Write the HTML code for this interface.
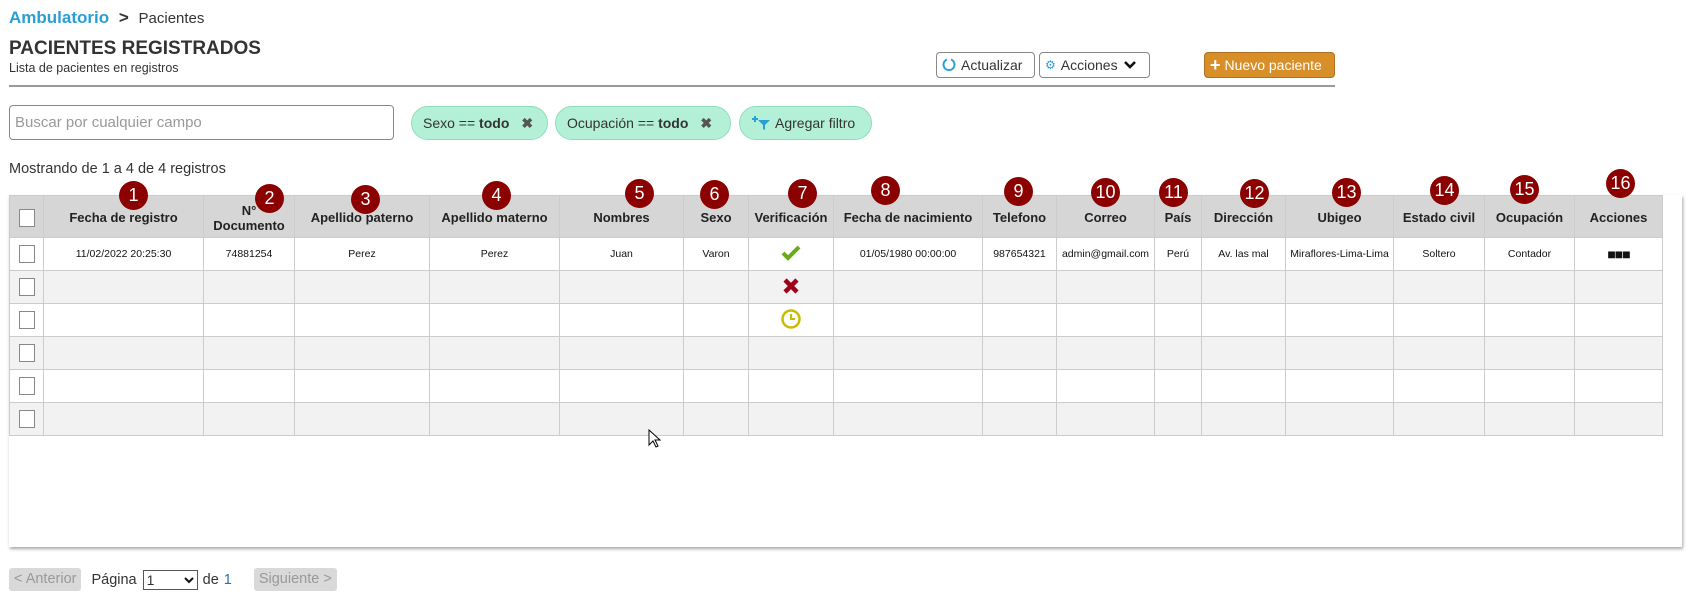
<!DOCTYPE html>
<html><head><meta charset="utf-8"><style>
*{box-sizing:border-box;margin:0;padding:0}
body{width:1696px;height:604px;background:#fff;font-family:"Liberation Sans",sans-serif;color:#333;position:relative;overflow:hidden}
.a{position:absolute;white-space:nowrap}
.crumb{left:9px;top:8px;font-size:17px}
.crumb b{color:#2a9fd6;font-weight:bold}
.title{left:9px;top:38px;font-size:19px;font-weight:bold;color:#333}
.sub{left:9px;top:61px;font-size:12.5px;color:#333}
.hr{left:9px;top:85px;width:1326px;height:2px;background:#999}
.btn{height:26px;top:52px;border:1px solid #888;border-radius:4px;background:#fff;font-size:14px;display:flex;align-items:center;padding:0 5px;color:#333}
.nuevo{background:#d98f27;border-color:#b07020;color:#fff;font-size:14px}
.search{left:9px;top:105px;width:385px;height:35px;border:1px solid #888;border-radius:4px;font-size:15px;color:#999;padding:8px 5px}
.chip{top:106px;height:34px;background:#b4f0d8;border:1px solid #8fdcbc;border-radius:17px;font-size:14px;display:flex;align-items:center;padding:0 11px;color:#333}
.chip .x{color:#555;font-weight:bold;margin-left:12px;font-size:14px}
.most{left:9px;top:161px;font-size:14.5px}
.card{left:9px;top:195px;width:1673px;height:352px;background:#fff;box-shadow:1px 2px 3px rgba(0,0,0,.35)}
table{position:absolute;left:9px;top:195px;border-collapse:collapse;table-layout:fixed}
td,th{border:1px solid #ccc;text-align:center;font-size:10.5px;color:#111;height:33px;padding:0;white-space:nowrap;overflow:hidden}
th{background:#d6d6d6;height:42px;font-size:13px;font-weight:bold;padding-top:2px;color:#222;line-height:15px}
tr:nth-child(odd) td{background:#f2f2f2}
.cb{display:inline-block;width:16px;height:18px;border:1px solid #888;background:#fff;vertical-align:middle}
.bd{position:absolute;width:29px;height:29px;border-radius:50%;background:#8b0000;color:#fff;font-size:18px;text-align:center;line-height:29px}
.pg{top:568px;height:23px;font-size:14.5px;display:flex;align-items:center}
.dis{background:#d9d9d9;color:#999;border-radius:3px;padding:0 5px;height:23px;line-height:23px}
</style></head><body>
<div class="a crumb"><b>Ambulatorio</b> <span style="font-weight:bold;margin:0 5px">&gt;</span> <span style="font-size:15px">Pacientes</span></div>
<div class="a title">PACIENTES REGISTRADOS</div>
<div class="a sub">Lista de pacientes en registros</div>
<div class="a btn" style="left:936px;width:99px"><svg width="14" height="16" viewBox="0 0 14 16" style="margin-right:5px"><path d="M5 2.5A5.5 5.5 0 1 0 9 2.5" fill="none" stroke="#2a9fd6" stroke-width="2"/></svg>Actualizar</div>
<div class="a btn" style="left:1039px;width:111px"><span style="color:#2a9fd6;font-size:12px;margin-right:5px">⚙</span>Acciones <svg width="14" height="10" viewBox="0 0 14 10" style="margin-left:5px"><path d="M2 2l5 5 5-5" fill="none" stroke="#111" stroke-width="2.6"/></svg></div>
<div class="a btn nuevo" style="left:1204px;width:131px"><span style="font-weight:bold;font-size:18px;margin-right:4px">+</span>Nuevo paciente</div>
<div class="a hr"></div>
<div class="a search">Buscar por cualquier campo</div>
<div class="a chip" style="left:411px;width:137px">Sexo ==&nbsp;<b>todo</b><span class="x">✖</span></div>
<div class="a chip" style="left:555px;width:176px">Ocupación ==&nbsp;<b>todo</b><span class="x">✖</span></div>
<div class="a chip" style="left:739px;width:133px"><svg width="20" height="16" viewBox="0 0 20 16" style="margin-right:4px"><path d="M1 4h6M4 1v6" stroke="#2a9fd6" stroke-width="2"/><path d="M7 5h12l-5 5v5l-2-1v-4z" fill="#2a9fd6"/></svg>Agregar filtro</div>
<div class="a most">Mostrando de 1 a 4 de 4 registros</div>
<div class="a card"></div>
<table>
<colgroup><col style="width:34px"><col style="width:160px"><col style="width:91px"><col style="width:135px"><col style="width:130px"><col style="width:124px"><col style="width:65px"><col style="width:85px"><col style="width:149px"><col style="width:74px"><col style="width:98px"><col style="width:47px"><col style="width:84px"><col style="width:108px"><col style="width:91px"><col style="width:90px"><col style="width:88px"></colgroup>
<tr><th><span class="cb"></span></th><th>Fecha de registro</th><th>N°<br>Documento</th><th>Apellido paterno</th><th>Apellido materno</th><th>Nombres</th><th>Sexo</th><th>Verificación</th><th>Fecha de nacimiento</th><th>Telefono</th><th>Correo</th><th>País</th><th>Dirección</th><th>Ubigeo</th><th>Estado civil</th><th>Ocupación</th><th>Acciones</th></tr>
<tr><td style="background:#fff"><span class="cb"></span></td><td>11/02/2022 20:25:30</td><td>74881254</td><td>Perez</td><td>Perez</td><td>Juan</td><td>Varon</td><td><svg width="20" height="16" viewBox="0 0 20 16"><path d="M2 8l5 5 11-11" fill="none" stroke="#6aaa12" stroke-width="4"/></svg></td><td>01/05/1980 00:00:00</td><td>987654321</td><td>admin@gmail.com</td><td>Perú</td><td>Av. las mal</td><td>Miraflores-Lima-Lima</td><td>Soltero</td><td>Contador</td><td style="font-size:14px;letter-spacing:-1px">■■■</td></tr>
<tr><td><span class="cb"></span></td><td></td><td></td><td></td><td></td><td></td><td></td><td><svg width="18" height="18" viewBox="0 0 18 18"><path d="M3 3l12 12M15 3L3 15" stroke="#a0001a" stroke-width="4.5"/></svg></td><td></td><td></td><td></td><td></td><td></td><td></td><td></td><td></td><td></td></tr>
<tr><td><span class="cb"></span></td><td></td><td></td><td></td><td></td><td></td><td></td><td><svg width="22" height="22" viewBox="0 0 22 22"><circle cx="11" cy="11" r="8.5" fill="none" stroke="#c8bd00" stroke-width="2.5"/><path d="M11 6v5h4" fill="none" stroke="#c8bd00" stroke-width="2"/></svg></td><td></td><td></td><td></td><td></td><td></td><td></td><td></td><td></td><td></td></tr>
<tr><td><span class="cb"></span></td><td></td><td></td><td></td><td></td><td></td><td></td><td></td><td></td><td></td><td></td><td></td><td></td><td></td><td></td><td></td><td></td></tr>
<tr><td><span class="cb"></span></td><td></td><td></td><td></td><td></td><td></td><td></td><td></td><td></td><td></td><td></td><td></td><td></td><td></td><td></td><td></td><td></td></tr>
<tr><td><span class="cb"></span></td><td></td><td></td><td></td><td></td><td></td><td></td><td></td><td></td><td></td><td></td><td></td><td></td><td></td><td></td><td></td><td></td></tr>
</table>
<div class="bd" style="left:119px;top:181px">1</div>
<div class="bd" style="left:255px;top:184px">2</div>
<div class="bd" style="left:351px;top:185px">3</div>
<div class="bd" style="left:482px;top:181px">4</div>
<div class="bd" style="left:625px;top:179px">5</div>
<div class="bd" style="left:700px;top:180px">6</div>
<div class="bd" style="left:788px;top:179px">7</div>
<div class="bd" style="left:871px;top:176px">8</div>
<div class="bd" style="left:1004px;top:177px">9</div>
<div class="bd" style="left:1091px;top:178px">10</div>
<div class="bd" style="left:1159px;top:178px">11</div>
<div class="bd" style="left:1240px;top:179px">12</div>
<div class="bd" style="left:1332px;top:178px">13</div>
<div class="bd" style="left:1430px;top:176px">14</div>
<div class="bd" style="left:1510px;top:175px">15</div>
<div class="bd" style="left:1606px;top:169px">16</div>
<div class="a pg" style="left:9px">
<span class="dis">&lt; Anterior</span>
<span style="margin:0 6px 0 10px">Página</span>
<span style="display:inline-flex;align-items:center;justify-content:space-between;width:55px;height:20px;border:1px solid #555;padding:0 3px;font-size:14px">1<svg width="10" height="8" viewBox="0 0 10 8"><path d="M1 2l4 4 4-4" fill="none" stroke="#111" stroke-width="2"/></svg></span>
<span style="margin:0 5px">de</span><span style="color:#2a6fb0;margin-right:22px">1</span>
<span class="dis">Siguiente &gt;</span>
</div>
<svg class="a" style="left:648px;top:429px" width="14" height="20" viewBox="0 0 14 20"><path d="M1 1v15l4-4 3 6 2-1-3-6h5z" fill="#fff" stroke="#000" stroke-width="1"/></svg>
</body></html>
